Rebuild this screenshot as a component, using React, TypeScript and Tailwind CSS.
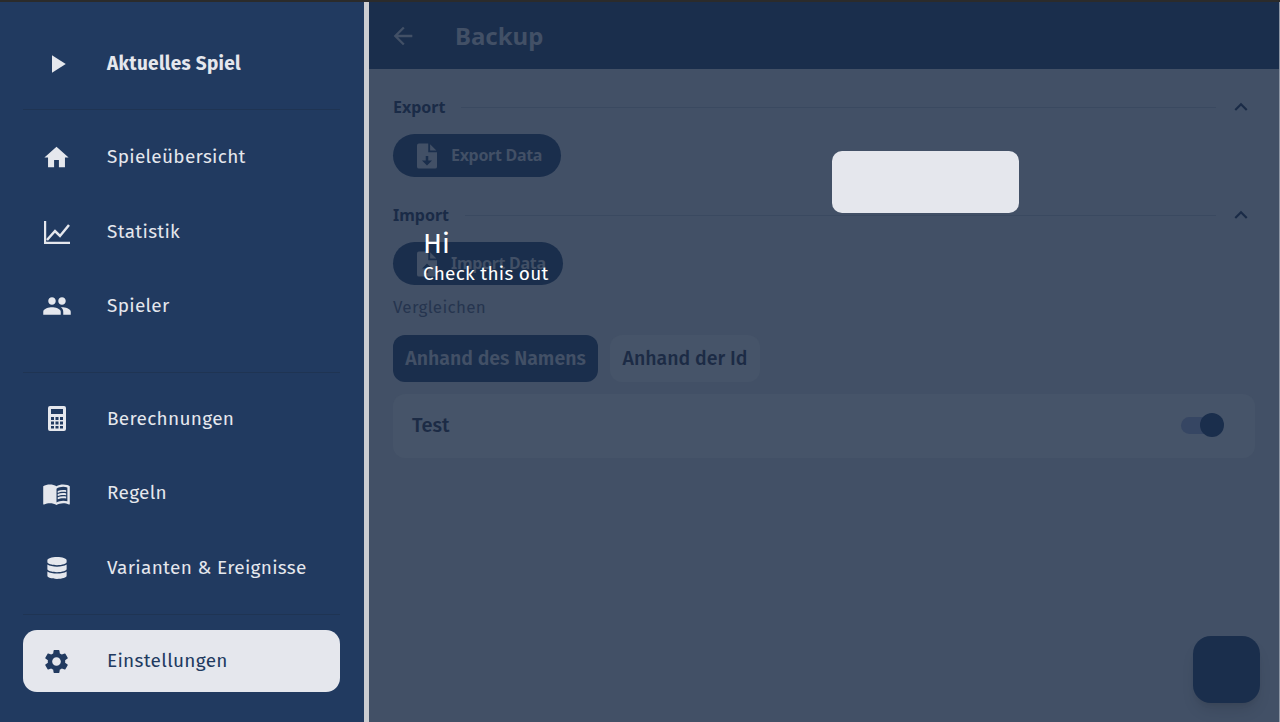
import { FaDatabase } from 'react-icons/fa';
import { MdArrowBack, MdExpandLess, MdHome, MdMenuBook, MdPeople, MdPlayArrow, MdSettings } from 'react-icons/md';
import type { ReactNode } from 'react';

const noto = "font-['Noto_Sans',sans-serif]";

function CalculatorIcon() {
  return (
    <svg className="mb-[2px]" width="18" height="25" viewBox="0 0 18 25" fill="currentColor" fillRule="evenodd">
      <path d="M2 0h14a2 2 0 0 1 2 2v21a2 2 0 0 1-2 2H2a2 2 0 0 1-2-2V2a2 2 0 0 1 2-2zM3 3v5h12V3zM3 11v3h3v-3zM7.5 11v3h3v-3zM12 11v3h3v-3zM3 15.5v3h3v-3zM7.5 15.5v3h3v-3zM12 15.5v3h3v-3zM3 20v2.5h3V20zM7.5 20v2.5h3V20zM12 20v2.5h3V20z" />
    </svg>
  );
}

function ChartIcon() {
  return (
    <svg className="mb-[1px]" width="26" height="23" viewBox="0 0 26 23" fill="none">
      <path d="M0 0h2.2v20.8H26V23H0z" fill="currentColor" />
      <path d="M3 19l8-9 5 5 9-11" stroke="currentColor" strokeWidth="2.5" />
    </svg>
  );
}

// same file body for both buttons, only the arrow differs
function FileIcon({ arrow }: { arrow: 'up' | 'down' }) {
  const arrowPath = arrow === 'down' ? 'M12 19.5L8 15.5h3V12h2v3.5h3z' : 'M12 11.5l4 4h-3V19h-2v-3.5H8z';
  return (
    <svg width="30" height="30" viewBox="0 0 24 24" fill="currentColor" fillRule="evenodd">
      <path d={`M5.5 2H13v7h7v11.5a1.5 1.5 0 0 1-1.5 1.5h-13A1.5 1.5 0 0 1 4 20.5v-17A1.5 1.5 0 0 1 5.5 2z${arrowPath}`} />
      <path d="M14.5 2.6l5 5h-5z" />
    </svg>
  );
}

function NavItem({ icon, label }: { icon: ReactNode; label: string }) {
  return (
    <div className="flex h-[62px] items-center">
      <div className="flex w-[67px] justify-center text-[#e5e7ed]">{icon}</div>
      <span className="ml-[17px] text-[19px] tracking-[0.3px] text-[#e5e7ed]">{label}</span>
    </div>
  );
}

function Divider() {
  return <div className="h-px bg-[#1f3453]" />;
}

function Section({ title, children }: { title: string; children: ReactNode }) {
  return (
    <div>
      <div className="flex h-4 items-center gap-3">
        <span className={`mr-1 text-[16px] font-bold text-[#1a2b47] ${noto}`}>{title}</span>
        <div className="h-px flex-1 bg-[#3a4960]" />
        <div className="mr-px text-[#1a2b47]">
          <MdExpandLess size={26} />
        </div>
      </div>
      {children}
    </div>
  );
}

function ActionButton({ arrow, label, w }: { arrow: 'up' | 'down'; label: string; w: string }) {
  return (
    <div className={`mt-[19px] flex h-[43px] ${w} items-center rounded-full bg-[#1a2e4c] pl-[19px] text-[#425066]`}>
      <FileIcon arrow={arrow} />
      <span className={`ml-[9px] pb-[2px] text-[16px] font-bold tracking-[-0.3px] ${noto}`}>{label}</span>
    </div>
  );
}

export default function App() {
  return (
    <div className="relative flex h-[722px] w-[1280px] flex-col overflow-hidden bg-[#425066] font-['Fira_Sans','Noto_Sans',sans-serif]">
      <div className="h-[2px] bg-[#2b2b2b]" />
      <div className="flex flex-1">
        <aside className="w-[364px] bg-[#213a60] pl-[23px] pr-[24px]">
          <div className="flex h-[107px] items-center pt-[17px]">
            <div className="flex w-[67px] justify-center text-[#e5e7ed]">
              <MdPlayArrow size={30} />
            </div>
            <span className="ml-[17px] text-[19px] font-bold tracking-[0.3px] text-[#e5e7ed]">Aktuelles Spiel</span>
          </div>
          <Divider />
          <div className="mt-[16px] flex flex-col gap-[12.5px]">
            <NavItem icon={<MdHome size={29} />} label="Spieleübersicht" />
            <div className="pt-[1px]">
              <NavItem icon={<ChartIcon />} label="Statistik" />
            </div>
            <div className="-mt-[1px]">
              <NavItem icon={<MdPeople size={30} />} label="Spieler" />
            </div>
          </div>
          <div className="mt-[35px]"><Divider /></div>
          <div className="mt-[15px] flex flex-col gap-[12.5px]">
            <NavItem icon={<CalculatorIcon />} label="Berechnungen" />
            <NavItem icon={<MdMenuBook size={29} />} label="Regeln" />
            <NavItem icon={<FaDatabase size={22} />} label="Varianten & Ereignisse" />
          </div>
          <div className="mt-[15px]"><Divider /></div>
          <div className="mt-[15px] flex h-[62px] items-center rounded-[14px] bg-[#e5e7ed] text-[#213a60]">
            <div className="flex w-[67px] justify-center">
              <MdSettings size={29} />
            </div>
            <span className="ml-[17px] text-[19px] tracking-[0.3px]">Einstellungen</span>
          </div>
        </aside>
        <div className="w-[5px] bg-[#cccdd1]" />
        <main className="flex flex-1 flex-col border-r border-r-[#8e97a5]">
          <header className="flex h-[67px] items-center bg-[#1a2e4c] pl-[20px] text-[#425066]">
            <MdArrowBack size={28} />
            <span className={`ml-[38px] text-[24px] font-bold ${noto}`}>Backup</span>
          </header>
          <div className="px-6 pt-[30px]">
            <Section title="Export">
              <ActionButton arrow="down" label="Export Data" w="w-[168px]" />
            </Section>
            <div className="mt-[30px]">
              <Section title="Import">
                <ActionButton arrow="up" label="Import Data" w="w-[170px]" />
              </Section>
            </div>
            <p className="mt-[10px] text-[17px] tracking-[0.3px] text-[#26354f]">Vergleichen</p>
            <div className="mt-[14px] flex gap-3">
              <div className="flex h-[47px] w-[205px] items-center justify-center rounded-[12px] bg-[#1a2e4c] pt-[2px] text-[19.5px] font-semibold text-[#425066]">
                Anhand des Namens
              </div>
              <div className="flex h-[47px] w-[150px] items-center justify-center rounded-[12px] bg-[#465469] pt-[2px] text-[19.5px] font-medium text-[#1c2b45]">
                Anhand der Id
              </div>
            </div>
            <div className="mt-3 flex h-[64px] items-center justify-between rounded-[12px] bg-[#465469] pl-[19px] pr-[36px]">
              <span className="pb-[1px] text-[20px] font-medium text-[#1c2b45]">Test</span>
              <div className="relative h-[17px] w-[38px] rounded-full bg-[#364663]">
                <div className="absolute -right-[5px] -top-[4px] h-[24px] w-[24px] rounded-full bg-[#1a2e4c]" />
              </div>
            </div>
          </div>
        </main>
      </div>

      {/* tour overlay bits */}
      <div className="absolute left-[832px] top-[151px] h-[62px] w-[187px] rounded-[10px] bg-[#e5e7ed]" />
      <div className="absolute left-[423px] top-[226px] text-white">
        <div className="text-[28px] leading-[36px]">Hi</div>
        <div className="text-[19px] leading-[24px] tracking-[0.25px]">Check this out</div>
      </div>
      <div className="absolute left-[1193px] top-[636px] h-[67px] w-[67px] rounded-[18px] bg-[#1a2e4c] shadow-lg" />
    </div>
  );
}
